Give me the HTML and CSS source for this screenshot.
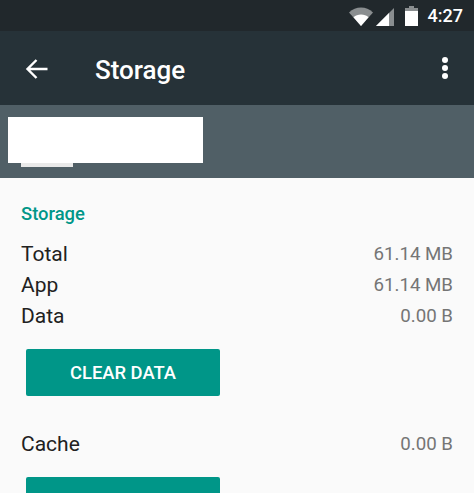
FILE: index.html
```html
<!DOCTYPE html>
<html lang="en">
<head>
<meta charset="utf-8">
<title>Storage</title>
<link rel="stylesheet" href="styles.css">
</head>
<body>
<div class="screen">
  <div class="status">
    <svg class="ic-wifi" width="24" height="19" viewBox="0 0 24 19"><path d="M0 5.500C3.500 2 7.500 .5 12 .5s8.500 1.500 12 5L12 19z" fill="#8a8e90"/><path d="M4.500 10.300C6.500 8.500 9 7.500 12 7.500s5.500 1 7.500 2.800L12 19z" fill="#fff"/></svg>
    <svg class="ic-signal" width="18" height="18" viewBox="0 0 18 18"><path d="M18 0V18H0z" fill="#8a8e90"/><path d="M13 5V18H0z" fill="#fff"/></svg>
    <svg class="ic-batt" width="13" height="20" viewBox="0 0 13 20"><path d="M4 0H9V2H13V20H0V2H4z" fill="#8a8e90"/><rect y="5" width="13" height="15" fill="#fff"/></svg>
    <span class="clock">4:27</span>
  </div>
  <div class="toolbar">
    <svg class="ic-back" width="24" height="24" viewBox="0 0 24 24"><path d="M22.500 12H2.500M11.500 3L2.500 12L11.500 21" fill="none" stroke="#fff" stroke-width="2.400"/></svg>
    <h1 class="title">Storage</h1>
    <div class="dots"><i></i><i></i><i></i></div>
  </div>
  <div class="app-head">
    <div class="mask"></div>
    <div class="mask-tab"></div>
  </div>
  <div class="content">
    <div class="section">Storage</div>
    <div class="rows">
      <div class="row"><span>Total</span><span class="val">61.14 MB</span></div>
      <div class="row"><span>App</span><span class="val">61.14 MB</span></div>
      <div class="row"><span>Data</span><span class="val">0.00 B</span></div>
    </div>
    <div class="btn">CLEAR DATA</div>
    <div class="row cache"><span>Cache</span><span class="val">0.00 B</span></div>
    <div class="btn btn-cut"></div>
  </div>
</div>
</body>
</html>
```
FILE: styles.css
```css
html, body {
  margin: 0;
  padding: 0;
  height: 100%;
  overflow: hidden;
}
.screen {
  width: 474px;
  height: 493px;
  display: flex;
  flex-direction: column;
  overflow: hidden;
  font-family: Roboto, "Liberation Sans", sans-serif;
  background: #fafafa;
}
.status {
  height: 31px;
  flex: none;
  background: #21282c;
  display: flex;
  align-items: center;
  justify-content: flex-end;
  padding-right: 11px;
  box-sizing: border-box;
}
.status svg { flex: none; }
.ic-wifi { margin-right: 3px; margin-top: 1px; }
.ic-signal { margin-right: 11px; margin-top: 2px; }
.ic-batt { margin-right: 9px; margin-top: 1px; }
.clock {
  color: #fff;
  font-size: 18px;
  font-weight: 500;
  width: 36px;
  text-align: right;
}
.toolbar {
  height: 74px;
  flex: none;
  background: #263238;
  display: flex;
  align-items: center;
  box-sizing: border-box;
  padding: 0 26px 0 25px;
}
.ic-back { flex: none; margin: 2px 46px 0 0; }
.title {
  margin: 4px 0 0;
  flex: 1;
  color: #fff;
  font-size: 26px;
  font-weight: 500;
}
.dots {
  display: flex;
  flex-direction: column;
  gap: 2px;
}
.dots i {
  display: block;
  width: 6px;
  height: 6px;
  border-radius: 50%;
  background: #fff;
}
.app-head {
  height: 73px;
  flex: none;
  background: #505f66;
  padding: 12px 0 0 8px;
  box-sizing: border-box;
}
.mask {
  width: 195px;
  height: 46px;
  background: #fff;
}
.mask-tab {
  width: 52px;
  height: 4px;
  margin-left: 13px;
  background: #e9e9e9;
}
.content {
  flex: 1;
  padding: 0 21px;
  background: #fafafa;
}
.section {
  color: #009688;
  font-size: 18.400px;
  font-weight: 500;
  line-height: 20px;
  margin-top: 26px;
}
.rows { margin-top: 14px; }
.row {
  display: flex;
  justify-content: space-between;
  align-items: center;
  height: 31px;
  font-size: 21px;
  color: #212121;
}
.val {
  font-size: 18.700px;
  color: #757575;
}
.btn {
  width: 194px;
  height: 47px;
  margin: 18px 0 0 5px;
  border-radius: 2px;
  background: #009688;
  color: #fff;
  font-size: 18.400px;
  font-weight: 500;
  display: flex;
  align-items: center;
  justify-content: center;
}
.cache { margin-top: 32px; }
.btn-cut { margin-top: 18px; }
```
